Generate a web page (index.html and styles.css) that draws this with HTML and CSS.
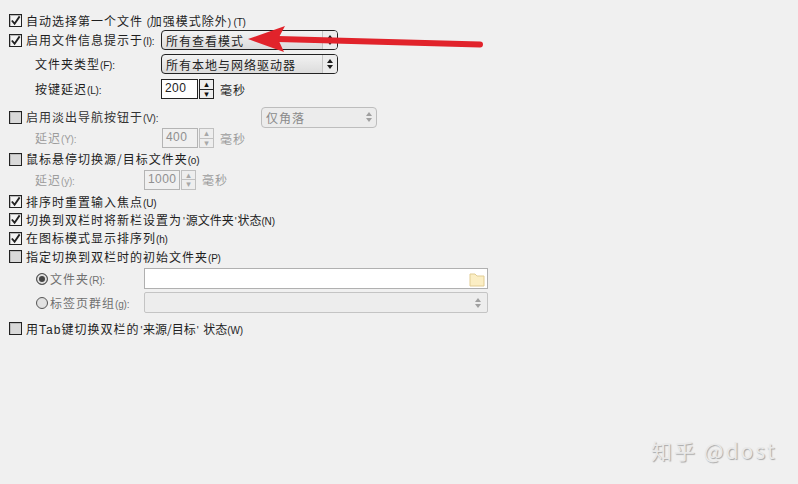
FILE: index.html
```html
<!DOCTYPE html>
<html lang="zh">
<head>
<meta charset="utf-8">
<title>设置</title>
<link rel="stylesheet" href="styles.css">
</head>
<body>
<main class="panel">
  <div class="row h19"><span class="cb on"><svg viewBox="0 0 12 12"><path d="M2 6l3 3.5L10.5 1.5"/></svg></span><label>自动选择第一个文件 <i>(</i>加强模式除外<i>) (T)</i></label></div>
  <div class="row h19"><span class="cb on"><svg viewBox="0 0 12 12"><path d="M2 6l3 3.5L10.5 1.5"/></svg></span><label class="lab-a">启用文件信息提示于<i>(I):</i></label>
    <div class="select"><span>所有查看模式</span><b class="arrows"><svg viewBox="0 0 8 12"><path d="M4 1l3 4H1zM4 11l3-4H1z"/></svg></b></div></div>
  <div class="row h25 indent gap0"><label class="lab-b">文件夹类型<i>(F):</i></label>
    <div class="select"><span>所有本地与网络驱动器</span><b class="arrows"><svg viewBox="0 0 8 12"><path d="M4 1l3 4H1zM4 11l3-4H1z"/></svg></b></div></div>
  <div class="row h25 indent"><label class="lab-b">按键延迟<i>(L):</i></label>
    <div class="spin"><span class="val">200</span><span class="btns"><b>▴</b><b>▾</b></span></div><span class="unit">毫秒</span></div>

  <div class="row h21 gap1"><span class="cb"></span><label class="lab-c">启用淡出导航按钮于<i>(V):</i></label>
    <div class="select dis wide"><span>仅角落</span><b class="arrows"><svg viewBox="0 0 8 12"><path d="M4 1l3 4H1zM4 11l3-4H1z"/></svg></b></div></div>
  <div class="row h21 indent dim"><label class="lab-d">延迟<i>(Y):</i></label>
    <div class="spin dis"><span class="val">400</span><span class="btns"><b>▴</b><b>▾</b></span></div><span class="unit">毫秒</span></div>
  <div class="row h21"><span class="cb"></span><label>鼠标悬停切换源/目标文件夹<i>(o)</i></label></div>
  <div class="row h20 indent dim"><label class="lab-e">延迟<i>(y):</i></label>
    <div class="spin dis"><span class="val">1000</span><span class="btns"><b>▴</b><b>▾</b></span></div><span class="unit">毫秒</span></div>

  <div class="row h18 gap2"><span class="cb on"><svg viewBox="0 0 12 12"><path d="M2 6l3 3.5L10.5 1.5"/></svg></span><label>排序时重置输入焦点<i>(U)</i></label></div>
  <div class="row h18"><span class="cb on"><svg viewBox="0 0 12 12"><path d="M2 6l3 3.5L10.5 1.5"/></svg></span><label>切换到双栏时将新栏设置为<i class="q">'</i><span class="tight">源文件夹</span><i class="q">'</i><span class="tight">状态</span><i>(N)</i></label></div>
  <div class="row h18"><span class="cb on"><svg viewBox="0 0 12 12"><path d="M2 6l3 3.5L10.5 1.5"/></svg></span><label>在图标模式显示排序列<i>(h)</i></label></div>
  <div class="row h18"><span class="cb"></span><label>指定切换到双栏时的初始文件夹<i>(P)</i></label></div>

  <div class="row h24 radio-row gap3"><span class="radio on"></span><label class="lab-r dimtext">文件夹<i>(R):</i></label>
    <div class="field"><svg class="folder" viewBox="0 0 16 16"><path d="M1 3h5l2 2h7v10H1z"/></svg></div></div>
  <div class="row h24 radio-row"><span class="radio"></span><label class="lab-r dimtext">标签页群组<i>(g):</i></label>
    <div class="field combo"><b class="arrows"><svg viewBox="0 0 8 12"><path d="M4 1l3 4H1zM4 11l3-4H1z"/></svg></b></div></div>
  <div class="row h18 gap4"><span class="cb"></span><label>用<i class="t">Tab</i>键切换双栏的<i class="q">'</i><span class="tight">来源/目标</span><i class="q">'</i> <span class="tight">状态</span><i>(W)</i></label></div>
</main>

<svg class="red-arrow" viewBox="0 0 240 30"><path class="shaft" d="M30 13L232 18.5"/><path class="head" d="M0 13L37 0L30 13L36 26z"/></svg>
<div class="watermark">知乎 @dost</div>
</body>
</html>
```
FILE: styles.css
```css
* { box-sizing: border-box; }
html, body { margin: 0; height: 100%; }
body {
  background: #f0f0f0;
  color: #1e1e1e;
  font: 12px "Noto Sans CJK SC", "Liberation Sans", sans-serif;
  overflow: hidden;
  position: relative;
}
.panel { padding: 11px 0 0 9px; display: flex; flex-direction: column; }
.row { display: flex; align-items: center; }
.h18 { height: 18.3px; }
.h19 { height: 19.5px; }
.h20 { height: 20.5px; }
.h21 { height: 21px; }
.h24 { height: 24px; }
.h25 { height: 25px; }
.gap0 { margin-top: 1.5px; }
.gap1 { margin-top: 5px; }
.gap2 { margin-top: 2.5px; }
.gap3 { margin-top: 1px; }
.gap4 { margin-top: 5px; }
.indent { padding-left: 26px; }
label { letter-spacing: 1px; line-height: 16px; white-space: pre; margin-left: 4px; }
.indent label { margin-left: 0; }
label i { font: 10px "Liberation Sans", sans-serif; letter-spacing: -.2px; }
label i.q { margin: 0 1px; }
label i.t { font-size: 12px; letter-spacing: 1px; }
.tight { letter-spacing: 0; }
.lab-a { width: 135px; }
.lab-b { width: 126px; }
.lab-c { width: 235px; color: #333; }
.lab-d { width: 127px; }
.lab-e { width: 109px; }
.lab-r { width: 94px; margin-left: 2px; }
.dim label, .dim .unit { color: #9c9c9c; }
.dimtext { color: #707070; }
.cb {
  width: 13px; height: 13px; flex: none;
  border: 1.5px solid #222;
  background: #d9d9d9;
  box-shadow: inset 1px 1px 0 #bbb;
}
.cb.on { background: #f4f4f4; }
.cb svg { display: block; width: 100%; height: 100%; }
.cb path { fill: none; stroke: #222; stroke-width: 2; }
.select {
  width: 177px; height: 20px; flex: none;
  border: 1.5px solid #222; border-radius: 4px;
  background: linear-gradient(#f2f2f2, #dcdcdc);
  display: flex; align-items: center; justify-content: space-between;
  padding-left: 4px;
  letter-spacing: 1px;
  color: #222;
}
.arrows { width: 15px; height: 100%; display: flex; align-items: center; justify-content: center; border-left: 1px solid #c4c4c4; background: #ececec; border-radius: 0 3px 3px 0; }
.arrows svg { width: 8px; height: 12px; fill: #1c1c1c; }
.select.dis { width: 116px; height: 21px; border: 1px solid #bdbdbd; color: #8a8a8a; background: #ececec; }
.select.dis .arrows, .combo .arrows { border-left: 0; background: none; }
.select.dis svg, .combo svg { fill: #a0a0a0; }
.spin { display: flex; align-items: center; height: 20px; flex: none; }
.val { width: 37px; height: 20px; border: 1.5px solid #222; background: #fff; padding-left: 3px; font: 12px/17px "Liberation Sans", sans-serif; letter-spacing: .4px; color: #222; }
.btns { width: 15px; height: 20px; margin-left: 1px; display: flex; flex-direction: column; border: 1.5px solid #222; background: #eee; }
.btns b { flex: 1; height: 50%; font: 9px/8px "DejaVu Sans", sans-serif; text-align: center; color: #111; overflow: hidden; }
.btns b + b { border-top: 1.5px solid #222; }
.unit { margin-left: 6px; letter-spacing: 1px; }
.spin.dis .val { width: 36px; height: 20px; border: 1px solid #b4b4b4; color: #8f8f8f; background: #f0f0f0; }
.spin.dis .btns { border: 1px solid #c0c0c0; }
.spin.dis b { color: #a8a8a8; }
.spin.dis b + b { border-top: 1px solid #c0c0c0; }
.radio-row { padding-left: 27px; }
.radio { width: 12px; height: 12px; flex: none; border-radius: 50%; border: 1px solid #555; background: #e2e2e2; box-shadow: inset 0 0 0 1px #ddd; }
.radio.on { background: #444; box-shadow: inset 0 0 0 2px #e0e0e0; }
.field { width: 344px; height: 21px; flex: none; border: 1px solid #b0b0b0; background: #fff; display: flex; align-items: center; justify-content: flex-end; padding-right: 2px; }
.field.combo { background: #ededed; border-color: #c4c4c4; border-radius: 2px; }
.folder { width: 16px; height: 16px; fill: #fbeec4; stroke: #e2cd94; stroke-width: 1; }
.red-arrow { position: absolute; left: 248px; top: 26px; width: 240px; height: 30px; }
.shaft { fill: none; stroke: #e1232b; stroke-width: 6; stroke-linecap: round; }
.head { fill: #e1232b; }
.watermark {
  position: absolute; left: 651px; top: 436px;
  font-size: 21px; line-height: 28px; letter-spacing: 2px;
  color: #e9e9e9;
  text-shadow: 1px 1px 1px #a8a8a8;
}
```
